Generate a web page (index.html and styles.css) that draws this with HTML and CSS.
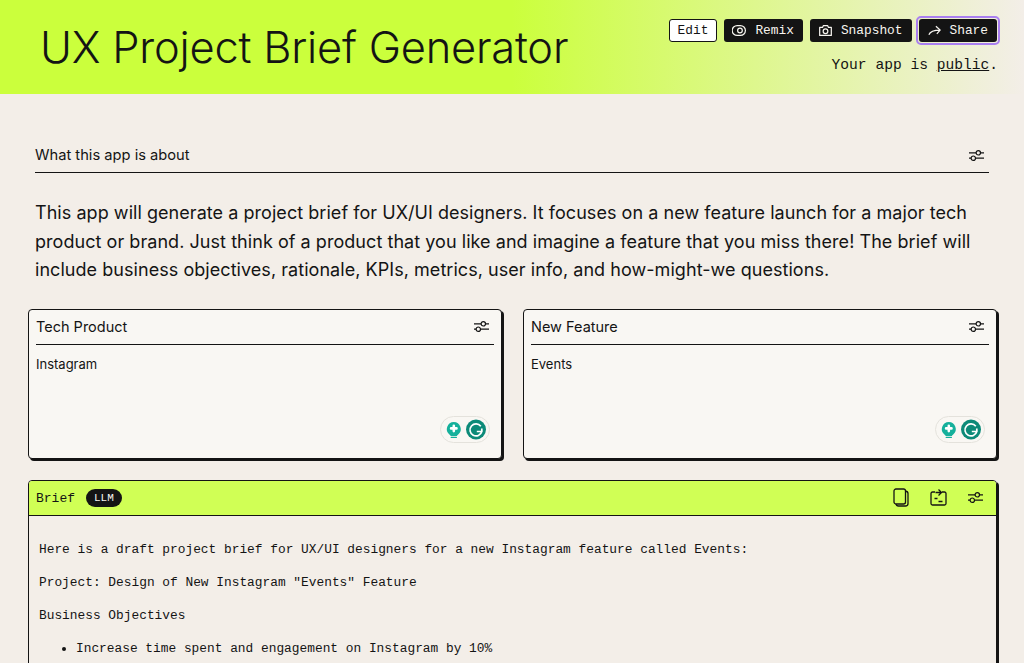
FILE: index.html
```html
<!DOCTYPE html>
<html lang="en">
<head>
	<meta charset="UTF-8">
	<title>UX Project Brief Generator</title>
	<link rel="stylesheet" href="styles.css">
</head>
<body>
	<svg class="defs" width="0" height="0">
		<symbol id="sliders" viewBox="0 0 15 13">
			<path d="M0 3.800h7.100M11.500 3.800H15M0 9.200h2.100M6.500 9.200H15" fill="none" stroke="currentColor" stroke-width="1.200"/>
			<circle cx="9.300" cy="3.800" r="2.200" fill="none" stroke="currentColor" stroke-width="1.200"/>
			<circle cx="4.300" cy="9.200" r="2.200" fill="none" stroke="currentColor" stroke-width="1.200"/>
		</symbol>
		<symbol id="assist" viewBox="0 0 50 27">
			<rect x=".5" y=".5" width="49" height="26" rx="13" fill="#f9f7f3" stroke="#e4e2dc"/>
			<path d="M13.800 6a7 7 0 0 0-4.400 12.400c.8.600 1.200 1.100 1.200 1.600H17c0-.5.400-1 1.200-1.600A7 7 0 0 0 13.800 6z" fill="#15b09b"/>
			<path d="M13.800 9.700v5.400M11.100 12.400h5.400" stroke="#fff" stroke-width="2.600" stroke-linecap="round"/>
			<path d="M11.300 21.400h5" stroke="#15b09b" stroke-width="1.400" stroke-linecap="round"/>
			<circle cx="36" cy="13.500" r="10" fill="#0c8a78"/>
			<path d="M40.800 10.300a6 6 0 1 0 1 5.200h-5M41.800 15.500v-3" fill="none" stroke="#fff" stroke-width="1.700"/>
		</symbol>
	</svg>

	<header class="top">
		<h1>UX Project Brief Generator</h1>
		<div class="top-side">
			<div class="actions">
				<button class="btn btn-light">Edit</button>
				<button class="btn">
					<svg width="15" height="15" viewBox="0 0 16 16" fill="none" stroke="currentColor" stroke-width="1.300"><path d="M5.500 2.700H9a5.300 5.300 0 0 1 0 10.600H5.500a5.300 5.300 0 0 1 0-10.600z"/><circle cx="8.500" cy="8" r="2.500"/></svg>
					Remix
				</button>
				<button class="btn">
					<svg width="15" height="15" viewBox="0 0 16 16" fill="none" stroke="currentColor" stroke-width="1.300"><path d="M1.800 4.700h3l1-2h4.400l1 2h3v8.600H1.800z" stroke-linejoin="round"/><circle cx="8" cy="8.800" r="2.500"/></svg>
					Snapshot
				</button>
				<div class="focus-ring">
					<button class="btn">
						<svg width="15" height="15" viewBox="0 0 16 16" fill="none" stroke="currentColor" stroke-width="1.300"><path d="M2 12.500C3.500 8.500 7 7.500 14 7.500M9.500 3.500L14 7.500 10.500 11.500"/></svg>
						Share
					</button>
				</div>
			</div>
			<p class="status">Your app is <u>public</u>.</p>
		</div>
	</header>

	<main class="page">
		<section class="about">
			<div class="field-head">
				<span>What this app is about</span>
				<svg class="ico"><use href="#sliders"/></svg>
			</div>
			<p class="about-text">This app will generate a project brief for UX/UI designers. It focuses on a new feature launch for a major tech product or brand. Just think of a product that you like and imagine a feature that you miss there! The brief will include business objectives, rationale, KPIs, metrics, user info, and how-might-we questions.</p>
		</section>

		<section class="inputs">
			<div class="card">
				<div class="field-head">
					<span>Tech Product</span>
					<svg class="ico"><use href="#sliders"/></svg>
				</div>
				<p class="value">Instagram</p>
				<svg class="assist"><use href="#assist"/></svg>
			</div>
			<div class="card">
				<div class="field-head">
					<span>New Feature</span>
					<svg class="ico"><use href="#sliders"/></svg>
				</div>
				<p class="value">Events</p>
				<svg class="assist"><use href="#assist"/></svg>
			</div>
		</section>

		<section class="output">
			<div class="output-head">
				<div class="output-title">
					<strong>Brief</strong>
					<span class="tag">LLM</span>
				</div>
				<div class="output-tools">
					<svg width="16" height="19" viewBox="0 0 16 19" fill="none" stroke="currentColor" stroke-width="1.300"><rect x="1" y="1" width="11.500" height="15" rx="2"/><path d="M12.500 3c1.500.3 2.500 1 2.500 2.500v10c0 1.500-1 2.500-2.500 2.500H5.500C4 18 3.200 17.400 3 16"/></svg>
					<svg width="17" height="19" viewBox="0 0 17 19" fill="none" stroke="currentColor" stroke-width="1.300"><path d="M5 4H2.500A1.500 1.500 0 0 0 1 5.500v10A1.500 1.500 0 0 0 2.500 17h12a1.500 1.500 0 0 0 1.500-1.500v-10A1.500 1.500 0 0 0 14.500 4H12"/><path d="M5.500 4.500h6M8.500 1.500l3 3-3 3M4.500 10.500h3M8.500 13.500h4"/></svg>
					<svg class="ico"><use href="#sliders"/></svg>
				</div>
			</div>
			<div class="output-body">
				<p>Here is a draft project brief for UX/UI designers for a new Instagram feature called Events:</p>
				<p>Project: Design of New Instagram "Events" Feature</p>
				<p>Business Objectives</p>
				<ul>
					<li>Increase time spent and engagement on Instagram by 10%</li>
				</ul>
			</div>
		</section>
	</main>
</body>
</html>
```

FILE: styles.css
```css
*{
	margin: 0;
	padding: 0;
	box-sizing: border-box;
}
html,body{
	height: 663px;
	overflow: hidden;
}
body{
	background-color: #f3eee8;
	color: #141414;
	font-family: "Inter", "Noto Sans", sans-serif;
}
.defs{
	position: absolute;
}
.top{
	height: 94px;
	padding: 16px 24px 0 40px;
	display: flex;
	justify-content: space-between;
	background: linear-gradient(90deg, #cbff3c 0%, #cbff3c 50%, #f3eee8 100%);
}
h1{
	margin-top: 1px;
	font-size: 43.400px;
	font-weight: 300;
	line-height: 60px;
	letter-spacing: -.2px;
}
.top-side{
	display: flex;
	flex-direction: column;
	align-items: flex-end;
	gap: 12px;
}
.actions{
	display: flex;
	align-items: center;
	gap: 7px;
}
.btn{
	height: 23px;
	padding: 0 9px 0 8px;
	display: flex;
	align-items: center;
	gap: 8px;
	border: 0;
	border-radius: 3px;
	background-color: #141414;
	color: #f7f5f0;
	font-family: "Liberation Mono", monospace;
	font-size: 12.830px;
}
.btn-light{
	padding: 0 8px;
	background-color: #fff;
	color: #141414;
	border: 1px solid #141414;
}
.focus-ring{
	margin-left: -3px;
	border: 2px solid #a97ff0;
	border-radius: 5px;
	padding: 1px;
}
.status{
	padding-right: 2px;
	font-family: "Liberation Mono", monospace;
	font-size: 14.600px;
}
.page{
	padding: 44px 27px 0 28px;
}
.about{
	padding: 0 8px 0 7px;
}
.field-head{
	padding: 8px 5px 8px 0;
	display: flex;
	align-items: center;
	justify-content: space-between;
	border-bottom: 1px solid #141414;
	font-size: 14.500px;
	line-height: 18px;
}
.about .field-head{
	font-size: 14.700px;
}
.ico{
	width: 15px;
	height: 13px;
}
.about-text{
	margin-top: 26px;
	font-size: 18px;
	line-height: 28.500px;
	letter-spacing: .05px;
}
.inputs{
	margin-top: 24px;
	display: grid;
	grid-template-columns: 474px 474px;
	gap: 21px;
}
.card{
	height: 150px;
	position: relative;
	padding: 0 7px;
	background-color: #f9f7f3;
	border: 1px solid #141414;
	border-radius: 4px;
	box-shadow: 2px 2px 0 #141414;
}
.value{
	margin-top: 11px;
	font-size: 13px;
	line-height: 17px;
}
.assist{
	position: absolute;
	right: 11px;
	bottom: 15px;
	width: 50px;
	height: 27px;
}
.output{
	margin-top: 21px;
	height: 300px;
	border: 1px solid #141414;
	border-radius: 4px;
	box-shadow: 2px 2px 0 #141414;
}
.output-head{
	height: 35px;
	padding: 0 13px 0 7px;
	display: flex;
	align-items: center;
	justify-content: space-between;
	background-color: #d0ff55;
	border-bottom: 1px solid #141414;
	border-radius: 3px 3px 0 0;
}
.output-title{
	display: flex;
	align-items: center;
	gap: 11px;
	font-family: "Liberation Mono", monospace;
	font-size: 13px;
}
.output-title strong{
	font-weight: 400;
	padding-top: 1px;
}
.tag{
	height: 18px;
	padding: 0 8px;
	display: flex;
	align-items: center;
	border-radius: 9px;
	background-color: #141414;
	color: #f7f5f0;
	font-size: 11px;
}
.output-tools{
	display: flex;
	align-items: center;
	gap: 21px;
}
.output-body{
	padding: 25px 10px 0;
	font-family: "Liberation Mono", monospace;
	font-size: 12.850px;
	line-height: 17px;
}
.output-body p{
	margin-bottom: 16px;
}
.output-body ul{
	padding-left: 37px;
}
```
